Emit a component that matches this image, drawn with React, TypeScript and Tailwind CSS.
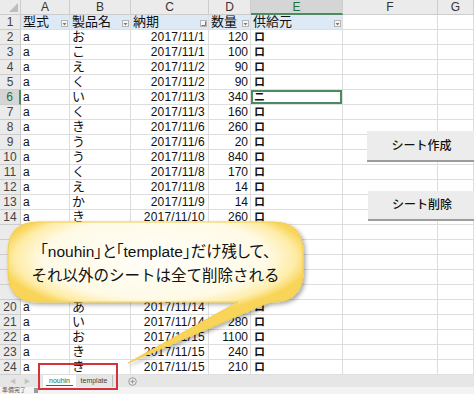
import React from 'react';

const font = { fontFamily: '"Liberation Sans", "Noto Sans CJK JP", sans-serif' };

const rows: [string, string, string, string, string][] = [
  ['a', 'お', '2017/11/1', '120', 'ロ'],
  ['a', 'こ', '2017/11/1', '100', 'ロ'],
  ['a', 'え', '2017/11/2', '90', 'ロ'],
  ['a', 'く', '2017/11/2', '90', 'ロ'],
  ['a', 'い', '2017/11/3', '340', 'ニ'],
  ['a', 'く', '2017/11/3', '160', 'ロ'],
  ['a', 'き', '2017/11/6', '260', 'ロ'],
  ['a', 'う', '2017/11/6', '20', 'ロ'],
  ['a', 'う', '2017/11/8', '840', 'ロ'],
  ['a', 'く', '2017/11/8', '170', 'ロ'],
  ['a', 'え', '2017/11/8', '14', 'ロ'],
  ['a', 'か', '2017/11/9', '14', 'ロ'],
  ['a', 'き', '2017/11/10', '260', 'ロ'],
  // rows 15-19 sit under the callout
  ['', '', '', '', ''],
  ['', '', '', '', ''],
  ['', '', '', '', ''],
  ['', '', '', '', ''],
  ['', '', '', '', ''],
  ['a', 'あ', '2017/11/14', '10', 'ロ'],
  ['a', 'い', '2017/11/14', '280', 'ロ'],
  ['a', 'お', '2017/11/15', '1100', 'ロ'],
  ['a', 'き', '2017/11/15', '240', 'ロ'],
  ['a', 'き', '2017/11/15', '210', 'ロ'],
];

const letters = ['A', 'B', 'C', 'D', 'E', 'F', 'G'];
const headers = ['型式', '製品名', '納期', '数量', '供給元'];

function FilterBtn({ sorted }: { sorted?: boolean }) {
  return (
    <span className="absolute right-[1px] bottom-[2px] flex h-[7px] w-[7px] items-center justify-center border border-[#b5b5b5] bg-[#f7f7f7]">
      {sorted ? (
        <svg width="5" height="5" viewBox="0 0 5 5">
          <path d="M4.5 0.5 V4.5 H0.5" fill="none" stroke="#777" strokeWidth="1" />
        </svg>
      ) : (
        <svg width="5" height="4" viewBox="0 0 5 4">
          <path d="M0.5 1 L4.5 1 L2.5 3.5 Z" fill="#777" />
        </svg>
      )}
    </span>
  );
}

const cell = 'relative border-r border-b border-[#dedede] overflow-hidden whitespace-nowrap leading-[14px]';
const rowHead = 'border-r border-b border-[#cdcdcd] bg-[#ebebeb] text-center text-[12px] leading-[14px] text-[#444]';

export default function App() {
  return (
    <div className="relative h-[394px] w-[474px] overflow-hidden bg-white" style={font}>
      <div className="grid grid-cols-[21px_49px_61px_78px_42px_92px_95px_36px] grid-rows-[15px] auto-rows-[15px] text-[12px] text-[#111]">
        {/* column headers */}
        <div className="relative border-r border-b border-[#cdcdcd] bg-[#ebebeb]">
          <svg className="absolute right-[2px] bottom-[2px]" width="9" height="9" viewBox="0 0 9 9">
            <path d="M9 0 V9 H0 Z" fill="#bdbdbd" />
          </svg>
        </div>
        {letters.map((l) => (
          <div
            key={l}
            className={
              l === 'E'
                ? 'border-r border-b-2 border-r-[#cdcdcd] border-b-[#4c8a62] bg-[#d5d5d5] text-center text-[12px] leading-[14px] text-[#217346]'
                : 'border-r border-b border-[#cdcdcd] bg-[#ebebeb] text-center text-[12px] leading-[14px] text-[#333]'
            }
          >
            {l}
          </div>
        ))}

        {/* row 1 */}
        <div className={rowHead}>1</div>
        {headers.map((h, i) => (
          <div key={h} className={`${cell} bg-[#dde9f5] border-[#c9d6e4] pl-[2px] text-[13px]`}>
            {h}
            <FilterBtn sorted={i === 2} />
          </div>
        ))}
        <div className={cell} />
        <div className={cell} />

        {rows.map((r, i) => {
          const n = i + 2;
          const sel = n === 6;
          return (
            <React.Fragment key={n}>
              <div className={sel ? 'border-r-2 border-b border-r-[#4c8a62] border-b-[#cdcdcd] bg-[#d5d5d5] text-center text-[12px] leading-[14px] text-[#217346]' : rowHead}>
                {n >= 15 && n <= 19 ? '' : n}
              </div>
              <div className={`${cell} pl-[2px]`}>{r[0]}</div>
              <div className={`${cell} pl-[2px] text-[13px]`}>{r[1]}</div>
              <div className={`${cell} pr-[3px] text-right text-[12px] tracking-[0.2px]`}>{r[2]}</div>
              <div className={`${cell} pr-[2px] text-right`}>{r[3]}</div>
              <div className={`${cell} pl-[3px] text-[11px] font-bold`}>
                {r[4]}
                {sel && <span className="absolute inset-0 border-2 border-[#4c8a62]" />}
              </div>
              <div className={cell} />
              <div className={cell} />
            </React.Fragment>
          );
        })}
      </div>

      {/* sheet tabs */}
      <div className="flex h-[12px] items-stretch bg-[#e6e6e6] text-[7px] leading-[12px]">
        <div className="flex w-[40px] items-center gap-[8px] pl-[10px] text-[6px] text-[#c2c2c2]">
          <span>◀</span>
          <span>▶</span>
        </div>
        <div className="relative ml-[3px] w-[33px] bg-white text-center text-[#217346]">
          nouhin
          <span className="absolute bottom-[1px] left-[3px] right-[3px] h-[1px] bg-[#217346]" />
        </div>
        <div className="w-[37px] border-r border-[#bdbdbd] text-center text-[#444]">template</div>
        <div className="ml-[15px] flex items-center">
          <svg width="9" height="9" viewBox="0 0 9 9">
            <circle cx="4.5" cy="4.5" r="3.8" fill="none" stroke="#8a8a8a" strokeWidth="0.8" />
            <path d="M4.5 2.5 V6.5 M2.5 4.5 H6.5" stroke="#8a8a8a" strokeWidth="0.8" />
          </svg>
        </div>
      </div>

      {/* status bar */}
      <div className="flex h-[7px] items-center gap-[8px] bg-[#f3f3f3] pl-[2px] text-[6px] leading-[7px] text-[#555]">
        <span>準備完了</span>
        <span className="h-[5px] w-[4px] bg-[#9a9a9a]" />
      </div>

      {/* form buttons */}
      <button className="absolute left-[367px] top-[131px] h-[31px] w-[107px] border-b-2 border-[#9c9c9c] bg-[#ececec] pl-[2px] text-[12px] font-medium text-[#111]">
        シート作成
      </button>
      <button className="absolute left-[368px] top-[191px] h-[30px] w-[106px] border-b-2 border-[#9c9c9c] bg-[#ececec] pl-[2px] text-[12px] font-medium text-[#111]">
        シート削除
      </button>

      {/* red highlight around tabs */}
      <div className="pointer-events-none absolute left-[38px] top-[363px] h-[27px] w-[80px] border-2 border-[#d6303a]" />

      {/* callout */}
      <svg className="pointer-events-none absolute left-0 top-0" width="474" height="394" viewBox="0 0 474 394">
        <defs>
          <radialGradient
            id="bub"
            gradientUnits="userSpaceOnUse"
            cx="155"
            cy="258"
            r="156"
            gradientTransform="translate(155 258) scale(1 0.36) translate(-155 -258)"
          >
            <stop offset="0" stopColor="#fffef9" />
            <stop offset="0.72" stopColor="#fffae6" />
            <stop offset="0.9" stopColor="#feeca6" />
            <stop offset="1" stopColor="#f8d458" />
          </radialGradient>
          <filter id="sh" x="-10%" y="-10%" width="120%" height="130%">
            <feDropShadow dx="2" dy="2" stdDeviation="2" floodColor="#000" floodOpacity="0.35" />
          </filter>
        </defs>
        <path
          d="M38 222 H273 Q303 222 303 252 V272 Q303 302 273 302 H270 L128 363 L238 302 H38 Q8 302 8 272 V252 Q8 222 38 222 Z"
          fill="url(#bub)"
          stroke="#f3cd4e"
          strokeWidth="1"
          filter="url(#sh)"
        />
      </svg>
      <div className="pointer-events-none absolute left-[8px] top-[240px] w-[295px] text-center text-[15.5px] leading-[24px] text-[#111]">
        <div className="[font-feature-settings:'palt']">「nouhin」と「template」だけ残して、</div>
        <div>それ以外のシートは全て削除される</div>
      </div>
    </div>
  );
}
